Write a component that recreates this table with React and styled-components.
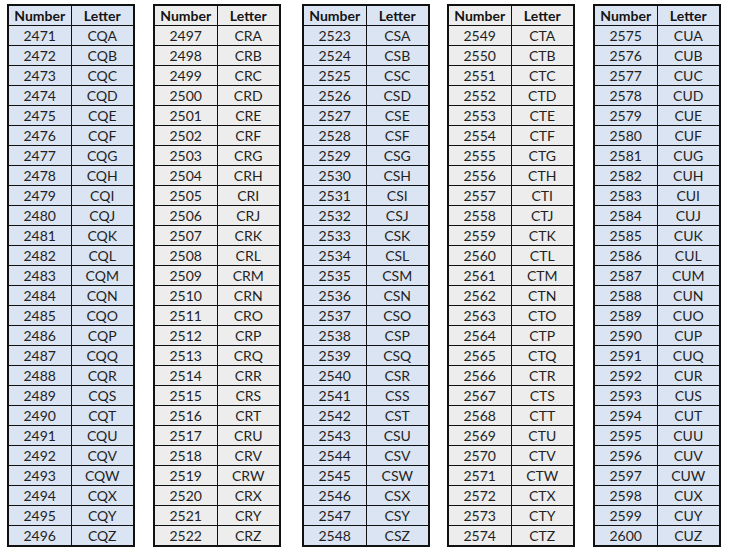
import React from "react";
import styled, { createGlobalStyle } from "styled-components";

const GlobalStyle = createGlobalStyle`
  body {
    margin: 0;
    background: #ffffff;
    font-family: Lato, "Open Sans", sans-serif;
  }
`;

const Page = styled.div`
  display: flex;
  gap: 18px;
  padding: 4px 0 0 7px;
`;

const Table = styled.table`
  width: 128px;
  margin-left: ${p => p.$nudge || 0}px;
  border-collapse: collapse;
  border: 2px solid #111;
  background: ${p => (p.$grey ? "#ededed" : "#dbe4f2")};
  table-layout: fixed;
`;

const HeadCell = styled.th`
  height: 19px;
  padding: 0;
  border: 1px solid #111;
  font-size: 14px;
  font-weight: 700;
  color: #141414;
  text-align: center;
`;

const Cell = styled.td`
  height: 19px;
  padding: 0;
  border: 1px solid #111;
  font-size: 14px;
  color: #1f1f1f;
  text-align: center;
`;

const ALPHA = "ABCDEFGHIJKLMNOPQRSTUVWXYZ";
const groups = [
  { prefix: "CQ", nudge: 0 },
  { prefix: "CR", nudge: 0 },
  { prefix: "CS", nudge: 3 },
  { prefix: "CT", nudge: -1 },
  { prefix: "CU", nudge: 0 },
];

const App = () => (
  <>
    <GlobalStyle />
    <Page>
      {groups.map(({ prefix, nudge }, g) => (
        <Table key={prefix} $grey={g % 2 === 1} $nudge={nudge}>
          <thead>
            <tr>
              <HeadCell>Number</HeadCell>
              <HeadCell>Letter</HeadCell>
            </tr>
          </thead>
          <tbody>
            {ALPHA.split("").map((ch, i) => (
              <tr key={ch}>
                <Cell>{2471 + g * 26 + i}</Cell>
                <Cell>{prefix + ch}</Cell>
              </tr>
            ))}
          </tbody>
        </Table>
      ))}
    </Page>
  </>
);

export default App;
